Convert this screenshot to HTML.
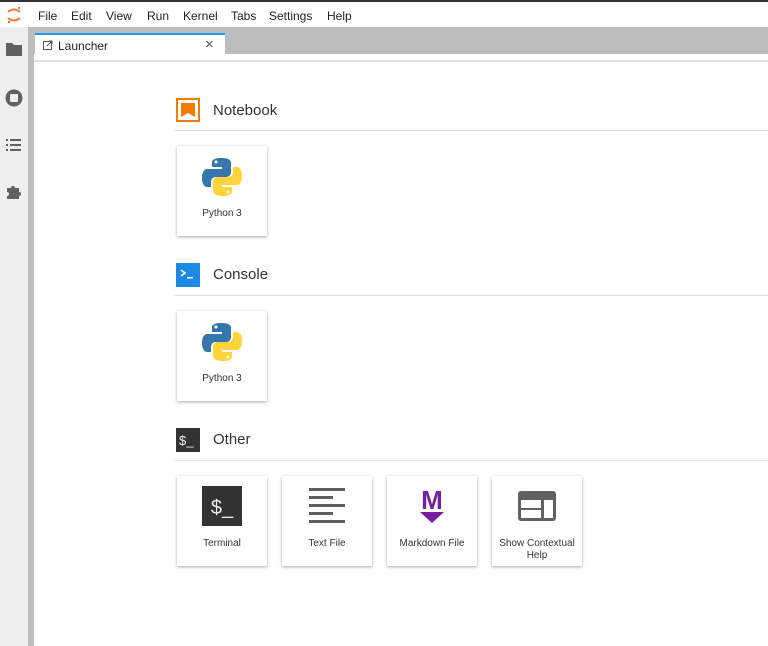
<!DOCTYPE html>
<html><head><style>
body{margin:0;width:768px;height:646px;overflow:hidden;background:#fff;font-family:"Liberation Sans",sans-serif;position:relative}
.abs{position:absolute}
.menu{top:0;left:0;width:768px;height:27px;background:#fff;border-top:2px solid #333;box-sizing:border-box}
.menu span{position:absolute;top:7px;font-size:12px;color:#222}
.side{top:27px;left:0;width:28px;height:619px;background:#eee}
.sideb{top:27px;left:28px;width:6px;height:619px;background:#bdbdbd}
.tabbar{top:27px;left:34px;width:734px;height:27px;background:#bdbdbd}
.tab{top:33px;left:35px;width:190px;height:28px;background:#fff;border-top:2px solid #2196f3;box-sizing:border-box}
.tabline{top:60px;left:34px;width:734px;height:2px;background:#e0e0e0}
.hdr{font-size:15px;color:#333}
.line{height:1px;background:#e0e0e0;left:174px;width:594px}
.card{width:90px;height:90px;background:#fff;box-shadow:0 1px 3px rgba(0,0,0,.35);font-size:10px;color:#333;text-align:center}
.card .lbl{position:absolute;top:62px;left:0;width:100%;line-height:12px}
.card svg{position:absolute;left:25px;top:12px}
</style></head><body>
<div class="abs menu">
<svg class="abs" style="left:6px;top:3px" width="16" height="20" viewBox="0 0 16 20"><path d="M2 7 Q8 2 14 7" stroke="#f37726" stroke-width="2" fill="none"/><path d="M2 13 Q8 18 14 13" stroke="#f37726" stroke-width="2" fill="none"/><circle cx="13" cy="3" r="1" fill="#666"/><circle cx="3" cy="17" r="1" fill="#666"/></svg>
<span style="left:38px">File</span><span style="left:71px">Edit</span><span style="left:106px">View</span><span style="left:147px">Run</span><span style="left:183px">Kernel</span><span style="left:231px">Tabs</span><span style="left:269px">Settings</span><span style="left:327px">Help</span>
</div>
<div class="abs side"></div><div class="abs sideb"></div>
<svg class="abs" style="left:6px;top:42px" width="16" height="14"><path d="M0 1h6l2 2h8v11H0z" fill="#616161"/></svg>
<svg class="abs" style="left:5px;top:89px" width="18" height="18"><circle cx="9" cy="9" r="8.5" fill="#616161"/><rect x="5" y="5" width="8" height="8" rx="1" fill="#eee"/></svg>
<svg class="abs" style="left:6px;top:138px" width="16" height="14" fill="#616161"><rect x="0" y="1" width="2" height="2"/><rect x="4" y="1" width="11" height="2"/><rect x="0" y="6" width="2" height="2"/><rect x="4" y="6" width="11" height="2"/><rect x="0" y="11" width="2" height="2"/><rect x="4" y="11" width="11" height="2"/></svg>
<svg class="abs" style="left:6px;top:183px" width="16" height="16"><path d="M1 5h4a2 2 0 1 1 4 0h4v4a2 2 0 1 1 0 4v3H1v-3a2 2 0 1 0 0-4z" fill="#616161"/></svg>
<div class="abs tabbar"></div>
<div class="abs tab">
<svg class="abs" style="left:8px;top:5px" width="10" height="10"><rect x="0.5" y="1.5" width="8" height="8" fill="none" stroke="#555"/><path d="M4 6L9 1M6 1h3v3" stroke="#555" fill="none"/></svg>
<span class="abs" style="left:23px;top:4px;font-size:12px;color:#222">Launcher</span>
<span class="abs" style="left:170px;top:1px;font-size:15px;color:#555">×</span>
</div>
<div class="abs tabline"></div>

<svg class="abs" style="left:176px;top:98px" width="24" height="24"><rect x="1" y="1" width="22" height="22" fill="none" stroke="#f57c00" stroke-width="2"/><path d="M5 5h14v14l-7-4-7 4z" fill="#f57c00"/></svg>
<div class="abs hdr" style="left:213px;top:102px">Notebook</div>
<div class="abs line" style="top:130px"></div>
<svg class="abs" style="left:176px;top:263px" width="24" height="24"><rect width="24" height="24" fill="#1e88e5"/><path d="M5 7l4 3-4 3" stroke="#fff" stroke-width="1.6" fill="none"/><rect x="11" y="14" width="6" height="1.5" fill="#fff"/></svg>
<div class="abs hdr" style="left:213px;top:266px">Console</div>
<div class="abs line" style="top:295px"></div>
<svg class="abs" style="left:176px;top:428px" width="24" height="24"><rect width="24" height="24" fill="#333"/><text x="3" y="17" font-family="Liberation Sans" font-size="13" fill="#eee">$_</text></svg>
<div class="abs hdr" style="left:213px;top:431px">Other</div>
<div class="abs line" style="top:460px"></div>

<div class="abs card" style="left:177px;top:146px">
<svg width="42" height="42" viewBox="0 0 42 42" style="left:24px;top:10px"><path d="M20 2c-9 0-9 4-9 4v5h10v2H6s-5 0-5 9 5 9 5 9h4v-5s0-5 5-5h10s5 0 5-5V6s0-4-10-4z" fill="#3776ab"/><path d="M22 40c9 0 9-4 9-4v-5H21v-2h15s5 0 5-9-5-9-5-9h-4v5s0 5-5 5H17s-5 0-5 5v9s0 5 10 5z" fill="#ffd43b"/><circle cx="15" cy="6" r="1.5" fill="#fff"/><circle cx="27" cy="36" r="1.5" fill="#fff"/></svg>
<div class="lbl" style="top:62px">Python 3</div></div>
<div class="abs card" style="left:177px;top:311px">
<svg width="42" height="42" viewBox="0 0 42 42" style="left:24px;top:10px"><path d="M20 2c-9 0-9 4-9 4v5h10v2H6s-5 0-5 9 5 9 5 9h4v-5s0-5 5-5h10s5 0 5-5V6s0-4-10-4z" fill="#3776ab"/><path d="M22 40c9 0 9-4 9-4v-5H21v-2h15s5 0 5-9-5-9-5-9h-4v5s0 5-5 5H17s-5 0-5 5v9s0 5 10 5z" fill="#ffd43b"/><circle cx="15" cy="6" r="1.5" fill="#fff"/><circle cx="27" cy="36" r="1.5" fill="#fff"/></svg>
<div class="lbl">Python 3</div></div>

<div class="abs card" style="left:177px;top:476px">
<svg width="40" height="40" style="left:25px;top:10px"><rect width="40" height="40" fill="#333"/><text x="20" y="28" text-anchor="middle" font-family="Liberation Sans" font-size="20" fill="#eee">$_</text></svg>
<div class="lbl">Terminal</div></div>
<div class="abs card" style="left:282px;top:476px">
<svg width="40" height="40" style="left:25px;top:10px" fill="#616161"><rect x="2" y="2" width="36" height="3"/><rect x="2" y="10" width="24" height="3"/><rect x="2" y="18" width="36" height="3"/><rect x="2" y="26" width="24" height="3"/><rect x="2" y="34" width="36" height="3"/></svg>
<div class="lbl">Text File</div></div>
<div class="abs card" style="left:387px;top:476px">
<svg width="40" height="44" style="left:25px;top:8px"><text x="20" y="25" text-anchor="middle" font-family="Liberation Sans" font-weight="bold" font-size="26" fill="#7b1fa2">M</text><path d="M8 28h24l-12 11z" fill="#7b1fa2"/></svg>
<div class="lbl">Markdown File</div></div>
<div class="abs card" style="left:492px;top:476px">
<svg width="40" height="34" style="left:25px;top:14px"><rect x="1" y="1" width="38" height="30" rx="3" fill="#616161"/><rect x="4" y="10" width="20" height="8" fill="#fff"/><rect x="4" y="20" width="20" height="8" fill="#fff"/><rect x="27" y="10" width="9" height="18" fill="#fff"/></svg>
<div class="lbl">Show Contextual<br>Help</div></div>
</body></html>
